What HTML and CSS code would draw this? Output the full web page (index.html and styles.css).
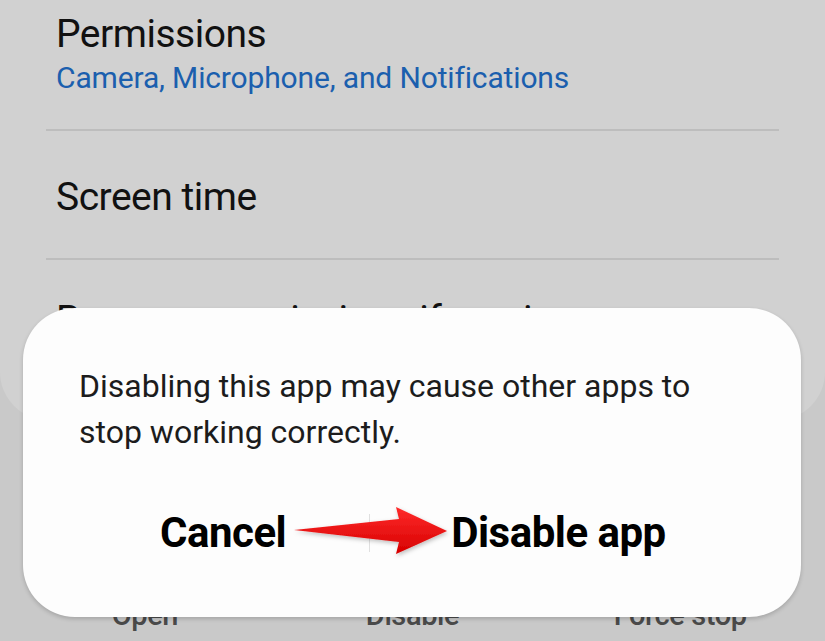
FILE: index.html
```html
<!DOCTYPE html>
<html>
<head>
<meta charset="utf-8">
<link rel="stylesheet" href="styles.css">
</head>
<body>
<div class="screen">
  <div class="card">
    <div class="row row-perm">
      <div class="title">Permissions</div>
      <div class="sub">Camera, Microphone, and Notifications</div>
    </div>
    <div class="row row-screen">
      <div class="title">Screen time</div>
    </div>
    <div class="row row-remove">
      <div class="title wrap">Remove permissions if app is unused</div>
    </div>
  </div>
  <div class="bottombar">
    <span class="bb">Open</span>
    <span class="bb">Disable</span>
    <span class="bb">Force stop</span>
  </div>

  <div class="dialog">
    <p class="msg">Disabling this app may cause other apps to stop working correctly.</p>
    <div class="actions">
      <span class="btn btn-cancel">Cancel</span>
      <span class="sep"></span>
      <span class="btn btn-disable">Disable app</span>
    </div>
  </div>

  <svg class="arrow" width="160" height="60" viewBox="290 500 160 60">
    <defs>
      <linearGradient id="ag" x1="0" y1="0" x2="0" y2="1">
        <stop offset="0" stop-color="#ff2a2a"/>
        <stop offset="1" stop-color="#d60000"/>
      </linearGradient>
      <filter id="sh" x="-20%" y="-40%" width="140%" height="180%">
        <feDropShadow dx="1" dy="2" stdDeviation="2" flood-color="#000" flood-opacity="0.25"/>
      </filter>
    </defs>
    <polygon points="294,530 399,519 396,507 447,531 396,554 399,542" fill="url(#ag)" filter="url(#sh)"/>
  </svg>
</div>
</body>
</html>
```

FILE: styles.css
```css
html, body {
  margin: 0;
  padding: 0;
}
body {
  width: 825px;
  height: 641px;
  overflow: hidden;
  background: #c9c9c9;
  font-family: Roboto, "Noto Sans", "Liberation Sans", sans-serif;
}
.screen {
  position: relative;
  width: 825px;
  height: 641px;
  display: flex;
  flex-direction: column;
}
.card {
  height: 420px;
  flex: none;
  background: #d1d1d1;
  border-radius: 0 0 48px 48px;
  padding: 0 46px;
  display: flex;
  flex-direction: column;
}
.row {
  padding-left: 10px;
  border-bottom: 2px solid #bdbdbd;
  box-sizing: border-box;
  flex: none;
}
.row:last-child {
  border-bottom: none;
}
.row-perm {
  height: 131px;
  padding-top: 11px;
}
.row-screen {
  height: 129px;
  padding-top: 4px;
  display: flex;
  align-items: center;
}
.row-remove {
  height: 84px;
  padding-top: 37px;
  overflow: hidden;
}
.title {
  font-size: 39px;
  letter-spacing: -0.5px;
  color: #111;
  line-height: 46px;
}
.wrap {
  max-width: 600px;
}
.sub {
  font-size: 30px;
  letter-spacing: -0.15px;
  color: #1b5fae;
  line-height: 36px;
  margin-top: 3px;
}
.bottombar {
  flex: 1;
  display: flex;
  align-items: flex-end;
  padding: 0 11px 9px;
}
.bb {
  flex: 1;
  text-align: center;
  font-size: 29px;
  letter-spacing: -0.4px;
  font-weight: 500;
  color: #4a4a4a;
  line-height: 34px;
}
.dialog {
  position: absolute;
  left: 23px;
  top: 308px;
  width: 778px;
  height: 309px;
  box-sizing: border-box;
  background: #fdfdfd;
  border-radius: 52px;
  box-shadow: 0 2px 4px rgba(0,0,0,0.18);
  padding: 55px 70px 0 56px;
}
.msg {
  margin: 0;
  font-size: 32px;
  line-height: 46px;
  color: #1c1c1c;
}
.actions {
  margin-top: 54px;
  display: flex;
  align-items: center;
}
.btn {
  font-size: 42px;
  letter-spacing: -0.5px;
  font-weight: 700;
  color: #000;
  line-height: 48px;
}
.btn-cancel {
  margin-left: 81px;
}
.sep {
  width: 1px;
  height: 38px;
  background: #e0e0e0;
  margin: 0 81px 0 83px;
}
.arrow {
  position: absolute;
  left: 290px;
  top: 500px;
}
```
